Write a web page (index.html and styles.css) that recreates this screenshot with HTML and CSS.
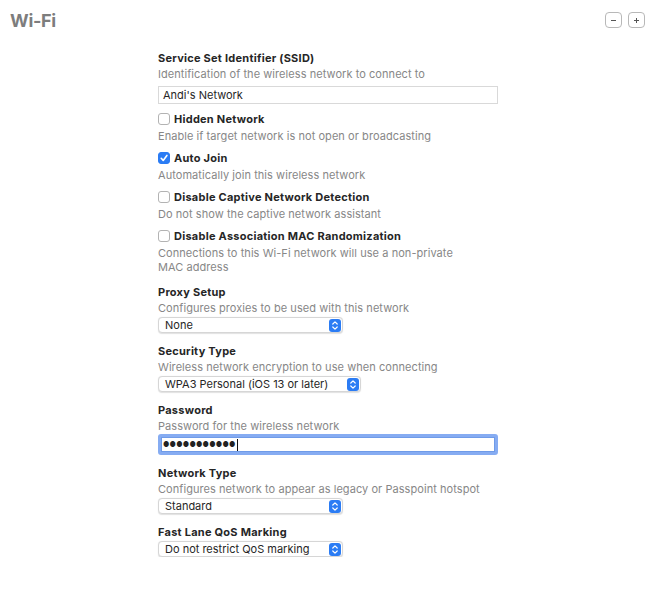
FILE: index.html
```html
<!DOCTYPE html>
<html lang="en">
<head>
<meta charset="utf-8">
<title>Wi-Fi</title>
<link rel="stylesheet" href="styles.css">
</head>
<body>
<header class="top">
  <h1 class="title">Wi-Fi</h1>
  <div class="tools">
    <button class="tool" aria-label="Remove">
      <svg width="7" height="7" viewBox="0 0 7 7"><path d="M1 3.5H6" stroke="#555" stroke-width="1"/></svg>
    </button>
    <button class="tool" aria-label="Add">
      <svg width="7" height="7" viewBox="0 0 7 7"><path d="M1 3.5H6M3.5 1V6" stroke="#555" stroke-width="1"/></svg>
    </button>
  </div>
</header>

<main class="form">
  <section class="field">
    <div class="label">Service Set Identifier (SSID)</div>
    <div class="desc">Identification of the wireless network to connect to</div>
    <div class="text-input">Andi's Network</div>
  </section>

  <section class="check-field">
    <div class="check-row"><span class="box"></span><span class="label">Hidden Network</span></div>
    <div class="desc">Enable if target network is not open or broadcasting</div>
  </section>

  <section class="check-field">
    <div class="check-row">
      <span class="box checked"><svg width="10" height="10" viewBox="0 0 10 10"><path d="M2.2 5.3L4.2 7.4L7.9 2.4" fill="none" stroke="#fff" stroke-width="1.6" stroke-linecap="round" stroke-linejoin="round"/></svg></span>
      <span class="label">Auto Join</span>
    </div>
    <div class="desc">Automatically join this wireless network</div>
  </section>

  <section class="check-field">
    <div class="check-row"><span class="box"></span><span class="label">Disable Captive Network Detection</span></div>
    <div class="desc">Do not show the captive network assistant</div>
  </section>

  <section class="check-field">
    <div class="check-row"><span class="box"></span><span class="label">Disable Association MAC Randomization</span></div>
    <div class="desc">Connections to this Wi-Fi network will use a non-private<br>MAC address</div>
  </section>

  <section class="field">
    <div class="label">Proxy Setup</div>
    <div class="desc">Configures proxies to be used with this network</div>
    <div class="select narrow"><span>None</span>
      <svg class="stepper" width="12" height="13" viewBox="0 0 12 13"><rect width="12" height="13" rx="3" fill="#2b7cf4"/><path d="M3.8 5L6 2.9L8.2 5M3.8 8L6 10.1L8.2 8" fill="none" stroke="#fff" stroke-width="1.2" stroke-linecap="round" stroke-linejoin="round"/></svg>
    </div>
  </section>

  <section class="field">
    <div class="label">Security Type</div>
    <div class="desc">Wireless network encryption to use when connecting</div>
    <div class="select wide"><span>WPA3 Personal (iOS 13 or later)</span>
      <svg class="stepper" width="12" height="13" viewBox="0 0 12 13"><rect width="12" height="13" rx="3" fill="#2b7cf4"/><path d="M3.8 5L6 2.9L8.2 5M3.8 8L6 10.1L8.2 8" fill="none" stroke="#fff" stroke-width="1.2" stroke-linecap="round" stroke-linejoin="round"/></svg>
    </div>
  </section>

  <section class="field">
    <div class="label">Password</div>
    <div class="desc">Password for the wireless network</div>
    <div class="text-input focused"><span class="dots">●●●●●●●●●●●</span><span class="caret"></span></div>
  </section>

  <section class="field">
    <div class="label">Network Type</div>
    <div class="desc">Configures network to appear as legacy or Passpoint hotspot</div>
    <div class="select narrow"><span>Standard</span>
      <svg class="stepper" width="12" height="13" viewBox="0 0 12 13"><rect width="12" height="13" rx="3" fill="#2b7cf4"/><path d="M3.8 5L6 2.9L8.2 5M3.8 8L6 10.1L8.2 8" fill="none" stroke="#fff" stroke-width="1.2" stroke-linecap="round" stroke-linejoin="round"/></svg>
    </div>
  </section>

  <section class="field">
    <div class="label">Fast Lane QoS Marking</div>
    <div class="select narrow no-desc"><span>Do not restrict QoS marking</span>
      <svg class="stepper" width="12" height="13" viewBox="0 0 12 13"><rect width="12" height="13" rx="3" fill="#2b7cf4"/><path d="M3.8 5L6 2.9L8.2 5M3.8 8L6 10.1L8.2 8" fill="none" stroke="#fff" stroke-width="1.2" stroke-linecap="round" stroke-linejoin="round"/></svg>
    </div>
  </section>
</main>
</body>
</html>
```

FILE: styles.css
```css
* { box-sizing: border-box; }

body {
  margin: 0;
  background: #fff;
  font-family: Inter, "Liberation Sans", Arial, sans-serif;
  font-size: 11px;
  color: #262626;
}

.top {
  height: 40px;
  display: flex;
  align-items: center;
  justify-content: space-between;
  padding: 0 9px 0 10px;
}

.title {
  margin: 0;
  font-size: 18px;
  font-weight: 700;
  color: #7d7d7d;
  letter-spacing: -0.3px;
}

.tools {
  display: flex;
  gap: 6px;
}

.tool {
  width: 17px;
  height: 16px;
  padding: 0;
  border: 1px solid #b8b8b8;
  border-radius: 4px;
  background: #fff;
  display: flex;
  align-items: center;
  justify-content: center;
}

.form {
  padding: 10px 0 0 158px;
  width: 498px;
}

.field { margin-top: 10px; }
.field:first-child { margin-top: 0; }
.check-field { margin-top: 7px; }

.label {
  font-weight: 700;
  line-height: 15px;
  letter-spacing: 0.25px;
  color: #262626;
}

.field > .label { padding-top: 1px; line-height: 15px; }
.field > .label + .desc { margin-top: 1px; }

.desc {
  margin-top: 2px;
  line-height: 14px;
  letter-spacing: 0.06px;
  color: #878787;
}

.check-row {
  display: flex;
  align-items: center;
  gap: 4px;
  height: 16px;
}

.check-row .label { line-height: 16px; }

.box {
  width: 12px;
  height: 12px;
  border: 1px solid #b3b3b3;
  border-radius: 3px;
  background: #fff;
  display: flex;
  align-items: center;
  justify-content: center;
}

.box.checked {
  background: #2b7cf4;
  border-color: #2b7cf4;
}

.text-input {
  margin-top: 5px;
  width: 340px;
  height: 18px;
  border: 1px solid #d9d9d9;
  padding: 0 4px;
  display: flex;
  align-items: center;
  color: #262626;
  background: #fff;
}

.text-input.focused {
  margin-top: 1px;
  height: 21px;
  border: 3px solid #86acf2;
  border-radius: 3px;
  box-shadow: inset 0 0 0 1px #6f9be8;
  padding: 0 2px;
}

.dots {
  font-size: 7px;
  letter-spacing: 0.2px;
  color: #222;
}

.caret {
  width: 1px;
  height: 12px;
  background: #111;
  margin-left: 1px;
}

.select {
  margin-top: 2px;
  height: 16px;
  border: 1px solid #d6d6d6;
  border-radius: 4px;
  box-shadow: 0 0.5px 1px rgba(0, 0, 0, 0.12);
  background: #fff;
  display: flex;
  align-items: center;
  justify-content: space-between;
  padding: 0 1px 0 6px;
  color: #262626;
}

.select.narrow { width: 185px; }
.select.wide { width: 203px; }
.select.no-desc { margin-top: 1px; }

.stepper { display: block; }
```
